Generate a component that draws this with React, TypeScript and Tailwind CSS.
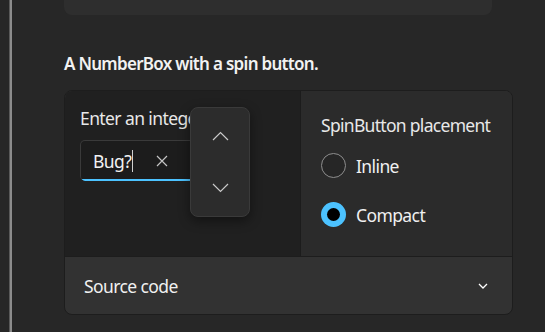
import React from "react";

const font = { fontFamily: '"Noto Sans", "Open Sans", sans-serif' };

function Chevron({ up }: { up?: boolean }) {
  return (
    <svg width="17" height="10" viewBox="0 0 17 10" fill="none">
      {up ? (
        <polyline points="1,9 8.5,1.5 16,9" stroke="#c9c9c9" strokeWidth="1.2" />
      ) : (
        <polyline points="1,1 8.5,8.5 16,1" stroke="#c9c9c9" strokeWidth="1.2" />
      )}
    </svg>
  );
}

export default function App() {
  return (
    <div className="flex h-[332px] w-[545px] overflow-hidden bg-[#272727] text-white" style={font}>
      <div className="ml-[9px] flex h-full">
        <div className="h-full w-[1px] bg-[#5a5a5a]" />
        <div className="h-full w-[2px] bg-[#8c8c8c]" />
      </div>
      <div className="ml-[52px] flex flex-col">
        <div className="h-[15px] w-[428px] rounded-b-lg bg-[#2e2e2e]" />
        <div className="mt-[37px] h-[24px] text-[17px] font-semibold leading-[24px] tracking-[-0.7px] text-[#f2f2f2]">
          A NumberBox with a spin button.
        </div>
        <div className="mt-[14px] w-[449px] overflow-hidden rounded-lg border border-[#1d1d1d] bg-[#323232]">
          <div className="flex h-[165px]">
            <div className="relative w-[235px] bg-[#202020]">
              <div className="absolute left-[15px] top-[15px] whitespace-nowrap text-[17.5px] leading-[24px] tracking-[-0.6px] text-[#e8e8e8]">
                Enter an integer:
              </div>
              <div className="absolute left-[15px] top-[49px] flex h-[41px] w-[140px] items-center overflow-hidden rounded-[5px] border border-[#3a3a3a] border-b-0 bg-[#1c1c1c]">
                <div className="absolute bottom-0 left-0 right-0 h-[2px] bg-[#4cc2ff]" />
                <span className="ml-[12px] text-[17.5px] leading-[24px] tracking-[-0.6px] text-[#f2f2f2]">Bug?</span>
                <span className="ml-[1px] h-[22px] w-[1px] bg-[#d0d0d0]" />
                <svg className="ml-[23px]" width="12" height="12" viewBox="0 0 12 12">
                  <path d="M1 1 L11 11 M11 1 L1 11" stroke="#c4c4c4" strokeWidth="1.2" />
                </svg>
              </div>
              <div className="absolute left-[125px] top-[16px] flex h-[110px] w-[60px] flex-col items-center justify-between rounded-lg border border-[#3a3a3a] bg-[#2c2c2c] py-[23px] shadow-[0_4px_12px_rgba(0,0,0,0.45)]">
                <Chevron up />
                <Chevron />
              </div>
            </div>
            <div className="flex-1 border-l border-[#1c1c1c] bg-[#2b2b2b] pl-[20px] pt-[22px]">
              <div className="text-[17.5px] leading-[24px] tracking-[-0.7px] text-[#e8e8e8]">SpinButton placement</div>
              <div className="mt-[16px] flex h-[25px] items-center">
                <div className="h-[25px] w-[25px] rounded-full border border-[#8e8e8e] bg-[#262626]" />
                <span className="ml-[10px] text-[17.5px] leading-[24px] tracking-[-0.6px] text-[#f0f0f0]">Inline</span>
              </div>
              <div className="mt-[24px] flex h-[25px] items-center">
                <div className="flex h-[25px] w-[25px] items-center justify-center rounded-full bg-[#4cc2ff]">
                  <div className="h-[13px] w-[13px] rounded-full bg-black" />
                </div>
                <span className="ml-[10px] text-[17.5px] leading-[24px] tracking-[-0.6px] text-[#f0f0f0]">Compact</span>
              </div>
            </div>
          </div>
          <div className="flex h-[58px] items-center justify-between border-t border-[#1d1d1d] pl-[19px] pr-[24px]">
            <span className="text-[17.5px] leading-[24px] tracking-[-0.6px] text-[#f0f0f0]">Source code</span>
            <svg width="10" height="6" viewBox="0 0 10 6" fill="none">
              <polyline points="1,1 5,5 9,1" stroke="#ffffff" strokeWidth="1.3" />
            </svg>
          </div>
        </div>
      </div>
    </div>
  );
}
